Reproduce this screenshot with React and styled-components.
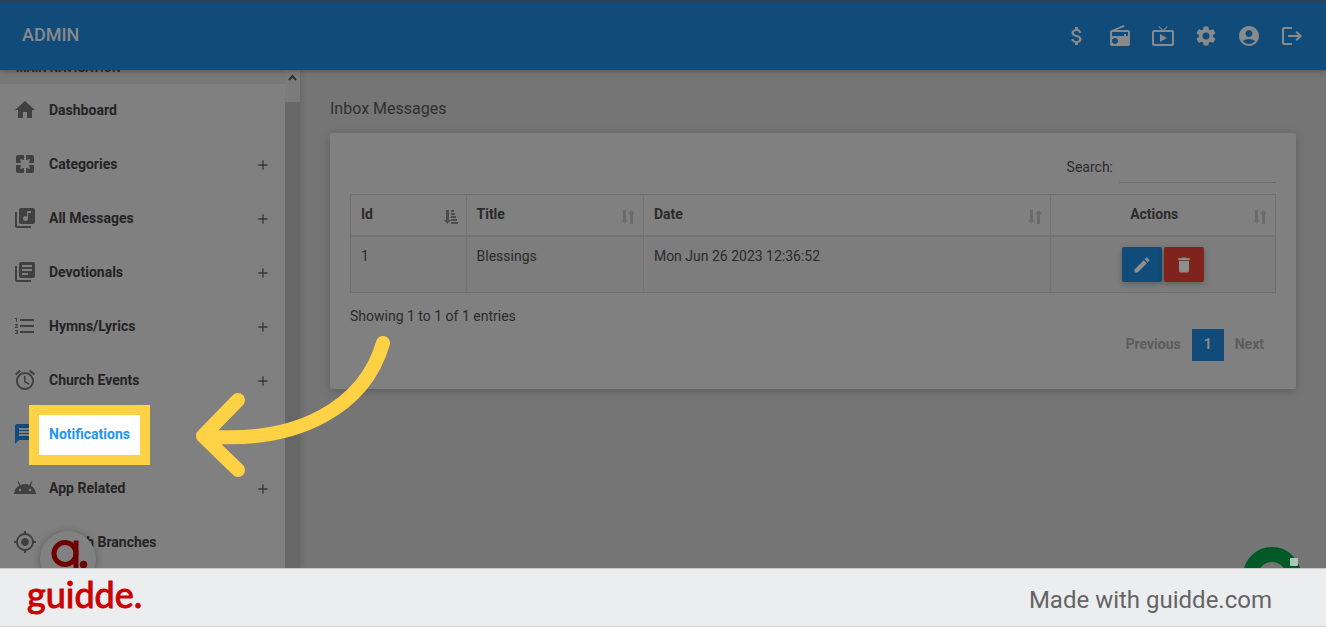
import React from "react";
import styled, { createGlobalStyle, css } from "styled-components";
import {
  MdHome,
  MdLibraryMusic,
  MdLibraryBooks,
  MdFormatListNumbered,
  MdAccessAlarm,
  MdMessage,
  MdAndroid,
  MdGpsFixed,
  MdAttachMoney,
  MdRadio,
  MdLiveTv,
  MdSettings,
  MdAccountCircle,
  MdLogout,
  MdModeEdit,
  MdDelete,
  MdAdd,
} from "react-icons/md";

const colors = {
  blue: "#104b79",
  red: "#7f231c",
  page: "#757575",
  surface: "#808080",
  line: "#747474",
  text: "#2b2b2b",
  accent: "#ffd144",
};

const GlobalStyle = createGlobalStyle`
  * { box-sizing: border-box; }
  body {
    margin: 0;
    background: ${colors.page};
    color: ${colors.text};
    font-family: Roboto, "Liberation Sans", sans-serif;
    font-size: 14px;
    line-height: 20px;
  }
  a { color: inherit; text-decoration: none; }
  button, input { font: inherit; color: inherit; }
`;

const Page = styled.div`
  display: flex;
  flex-direction: column;
  height: 100vh;
  overflow: hidden;
`;

const Header = styled.header`
  position: relative;
  z-index: 2;
  display: flex;
  flex: none;
  align-items: center;
  justify-content: space-between;
  height: 70px;
  padding: 0 22px;
  border-top: 2px solid #2b4257;
  background: ${colors.blue};
  color: #888a8c;
  box-shadow: 0 1px 5px rgba(0, 0, 0, 0.3);
`;

const Brand = styled.a`
  padding-bottom: 2px;
  font-size: 18px;
  font-weight: 500;
`;

const HeaderActions = styled.nav`
  display: flex;
  gap: 19px;
`;

const HeaderLink = styled.a`
  display: flex;
  font-size: 24px;
`;

const Body = styled.div`
  position: relative;
  display: flex;
  flex: 1;
  min-height: 0;
  overflow: hidden;
`;

const Sidebar = styled.aside`
  display: flex;
  flex: none;
  width: 300px;
  background: ${colors.surface};
  box-shadow: 2px 0 6px rgba(0, 0, 0, 0.12);
`;

const Menu = styled.nav`
  flex: 1;
`;

const MenuHeading = styled.div`
  display: flex;
  align-items: flex-end;
  height: 14px;
  padding: 0 16px 8px;
  overflow: hidden;
  background: #777777;
  font-size: 12px;
  font-weight: 700;
  line-height: 16px;
`;

const MenuList = styled.ul`
  margin: 0;
  padding: 0;
  list-style: none;
`;

const MenuLink = styled.a`
  display: flex;
  align-items: center;
  gap: 12px;
  height: 54px;
  padding: 0 14px 2px 13px;
  font-weight: 700;
  color: ${(p) => (p.$active ? "#2196f3" : "#242424")};

  > svg {
    flex: none;
    font-size: 24px;
    color: ${(p) => (p.$active ? colors.blue : "#404040")};
  }
`;

const MenuLabel = styled.span`
  position: relative;
  line-height: 54px;

  ${(p) =>
    p.$highlighted &&
    css`
      z-index: 1;

      &::before {
        content: "";
        position: absolute;
        z-index: -1;
        inset: -2px -20px -4px;
        border: 10px solid ${colors.accent};
        background: #ffffff;
      }
    `}
`;

const Expand = styled.span`
  display: flex;
  margin: 2px 0 0 auto;
  font-size: 16px;
  color: #383838;
`;

const Scrollbar = styled.div`
  display: flex;
  flex-direction: column;
  width: 15px;
  background: #676767;
`;

const ScrollUp = styled.div`
  display: flex;
  justify-content: center;
  height: 32px;
  padding-top: 4px;
  background: #7b7b7b;
`;

const Main = styled.main`
  flex: 1;
  min-width: 0;
  padding: 29px 30px;
`;

const Heading = styled.h1`
  margin: 0 0 14px;
  font-size: 16px;
  font-weight: 400;
  line-height: 20px;
  color: #303030;
`;

const Card = styled.section`
  padding: 20px 20px 28px;
  border-radius: 2px;
  background: ${colors.surface};
  box-shadow: 0 2px 10px rgba(0, 0, 0, 0.2);
`;

const SearchRow = styled.div`
  display: flex;
  justify-content: flex-end;
  margin-bottom: 11px;
`;

const SearchLabel = styled.label`
  display: flex;
  gap: 6px;
  line-height: 28px;
`;

const SearchInput = styled.input`
  width: 157px;
  height: 30px;
  padding: 0;
  border: 0;
  border-bottom: 1px solid #6c6c6c;
  outline: 0;
  background: transparent;
`;

const Table = styled.table`
  width: 100%;
  table-layout: fixed;
  border: 1px solid #6f6f6f;
  border-collapse: separate;
  border-spacing: 0;
`;

const HeadCell = styled.th`
  width: ${(p) => p.$width};
  height: 42px;
  padding: 9px 7px 11px 10px;
  border-bottom: 2px solid ${colors.line};
  border-right: ${(p) => (p.$last ? "0" : `1px solid ${colors.line}`)};
  font-weight: 700;
  vertical-align: top;
`;

const HeadContent = styled.div`
  display: flex;
  gap: 5px;
  height: 20px;
  text-align: ${(p) => (p.$center ? "center" : "left")};

  > span {
    flex: 1;
  }

  > svg {
    flex: none;
    margin-top: 5px;
  }
`;

const Cell = styled.td`
  height: 55px;
  padding: 9px 10px;
  border-right: ${(p) => (p.$last ? "0" : `1px solid ${colors.line}`)};
  background: #7d7d7d;
  vertical-align: top;
`;

const CellActions = styled.div`
  display: flex;
  justify-content: center;
  gap: 2px;
  padding-top: 1px;
`;

const ActionButton = styled.button`
  display: flex;
  align-items: center;
  justify-content: center;
  width: 40px;
  height: 35px;
  padding: 0;
  border: 0;
  border-radius: 2px;
  background: ${(p) => p.$color};
  color: #8e8e8e;
  font-size: 20px;
  box-shadow: 0 2px 6px rgba(0, 0, 0, 0.25);
`;

const Info = styled.p`
  margin: 13px 0 3px;
`;

const Pagination = styled.nav`
  display: flex;
  justify-content: flex-end;
  padding-right: 1px;
`;

const PageButton = styled.button`
  height: 32px;
  padding: 0 11px 2px;
  border: 0;
  background: ${(p) => (p.$current ? colors.blue : "transparent")};
  color: ${(p) => (p.$current ? "#8c8c8c" : "#5c5c5c")};
  font-weight: 700;
  min-width: 32px;
`;

const GuideBadge = styled.div`
  position: absolute;
  left: 40px;
  bottom: -19px;
  width: 56px;
  height: 56px;
  border-radius: 50%;
  background: #818181;
  box-shadow: 0 1px 8px rgba(0, 0, 0, 0.3);
`;

const ChatBadge = styled.div`
  position: absolute;
  right: 25px;
  bottom: -37px;
  width: 58px;
  height: 58px;
  border: 15px solid #005926;
  border-radius: 50%;

  &::after {
    content: "";
    position: absolute;
    top: -4px;
    right: -12px;
    width: 8px;
    height: 8px;
    border-radius: 1px;
    background: #a9c8b5;
  }
`;

const Pointer = styled.svg`
  position: absolute;
  z-index: 3;
  left: 190px;
  top: 260px;
  pointer-events: none;
`;

const Footer = styled.footer`
  position: relative;
  z-index: 2;
  display: flex;
  flex: none;
  align-items: center;
  justify-content: space-between;
  height: 59px;
  padding: 0 54px 0 27px;
  border-top: 1px solid #c4c5c6;
  border-bottom: 1px solid #d2d3d5;
  background: #ecedef;
`;

const Wordmark = styled.a`
  padding-bottom: 8px;
  font-family: Lato, sans-serif;
  font-size: 36px;
  font-weight: 400;
  line-height: 40px;
  color: #cb0000;
  -webkit-text-stroke: 1px #cb0000;
`;

const Credit = styled.span`
  padding-top: 4px;
  font-size: 24px;
  line-height: 32px;
  color: #636466;
`;

function CategoriesIcon() {
  return (
    <svg width="24" height="24" viewBox="0 0 24 24" fill="currentColor" aria-hidden="true">
      <path d="M3 5v6h5L7 7l4 1V3H5c-1.100 0-2 .9-2 2zM8 13H3v6c0 1.100.9 2 2 2h6v-5l-4 1 1-4zM17 17l-4-1v5h6c1.100 0 2-.9 2-2v-6h-5l1 4zM19 3h-6v5l4-1-1 4h5V5c0-1.100-.9-2-2-2z" />
    </svg>
  );
}

const headerLinks = [
  ["Donations", MdAttachMoney],
  ["Radio", MdRadio],
  ["Live TV", MdLiveTv],
  ["Settings", MdSettings],
  ["Account", MdAccountCircle],
  ["Log out", MdLogout],
];

const menuItems = [
  { label: "Dashboard", icon: MdHome },
  { label: "Categories", icon: CategoriesIcon, expandable: true },
  { label: "All Messages", icon: MdLibraryMusic, expandable: true },
  { label: "Devotionals", icon: MdLibraryBooks, expandable: true },
  { label: "Hymns/Lyrics", icon: MdFormatListNumbered, expandable: true },
  { label: "Church Events", icon: MdAccessAlarm, expandable: true },
  { label: "Notifications", icon: MdMessage, active: true },
  { label: "App Related", icon: MdAndroid, expandable: true },
  { label: "Church Branches", icon: MdGpsFixed },
];

const columns = [
  { label: "Id", width: "12.5%", sorted: true },
  { label: "Title", width: "19.2%" },
  { label: "Date", width: "44.1%" },
  { label: "Actions", width: "24.2%", center: true },
];

function SortIcon({ sorted }) {
  return (
    <svg width="16" height="16" viewBox="0 0 16 16" fill={sorted ? "#4d4d4d" : "#6b6b6b"} aria-hidden="true">
      <path d="M3 1h3v10h2L4.500 15 1 11h2z" />
      {sorted ? (
        <path d="M8 1h3v2H8zM8 4h4v2H8zM8 7h5v2H8zM8 10h6v2H8zM8 13h7v2H8z" />
      ) : (
        <path d="M10 15h3V5h2l-3.500-4L8 5h2z" />
      )}
    </svg>
  );
}

export default function App() {
  return (
    <Page>
      <GlobalStyle />
      <Header>
        <Brand href="#">ADMIN</Brand>
        <HeaderActions aria-label="Account">
          {headerLinks.map(([label, Icon]) => (
            <HeaderLink href="#" key={label} aria-label={label}>
              <Icon />
            </HeaderLink>
          ))}
        </HeaderActions>
      </Header>

      <Body>
        <Sidebar>
          <Menu aria-label="Main">
            <MenuHeading>MAIN NAVIGATION</MenuHeading>
            <MenuList>
              {menuItems.map(({ label, icon: Icon, expandable, active }) => (
                <li key={label}>
                  <MenuLink href="#" $active={active}>
                    <Icon />
                    <MenuLabel $highlighted={active}>{label}</MenuLabel>
                    {expandable && (
                      <Expand>
                        <MdAdd />
                      </Expand>
                    )}
                  </MenuLink>
                </li>
              ))}
            </MenuList>
          </Menu>
          <Scrollbar>
            <ScrollUp>
              <svg width="9" height="7" viewBox="0 0 9 7" aria-hidden="true">
                <path d="M1 6l3.500-4L8 6" fill="none" stroke="#333333" strokeWidth="2" />
              </svg>
            </ScrollUp>
          </Scrollbar>
        </Sidebar>

        <Main>
          <Heading>Inbox Messages</Heading>
          <Card>
            <SearchRow>
              <SearchLabel>
                Search:
                <SearchInput type="search" />
              </SearchLabel>
            </SearchRow>
            <Table>
              <thead>
                <tr>
                  {columns.map(({ label, width, sorted, center }) => (
                    <HeadCell key={label} $width={width} $last={center}>
                      <HeadContent $center={center}>
                        <span>{label}</span>
                        <SortIcon sorted={sorted} />
                      </HeadContent>
                    </HeadCell>
                  ))}
                </tr>
              </thead>
              <tbody>
                <tr>
                  <Cell>1</Cell>
                  <Cell>Blessings</Cell>
                  <Cell>Mon Jun 26 2023 12:36:52</Cell>
                  <Cell $last>
                    <CellActions>
                      <ActionButton type="button" aria-label="Edit" $color={colors.blue}>
                        <MdModeEdit />
                      </ActionButton>
                      <ActionButton type="button" aria-label="Delete" $color={colors.red}>
                        <MdDelete />
                      </ActionButton>
                    </CellActions>
                  </Cell>
                </tr>
              </tbody>
            </Table>
            <Info>Showing 1 to 1 of 1 entries</Info>
            <Pagination aria-label="Pagination">
              <PageButton type="button">Previous</PageButton>
              <PageButton type="button" $current>
                1
              </PageButton>
              <PageButton type="button">Next</PageButton>
            </Pagination>
          </Card>
        </Main>

        <GuideBadge>
          <svg width="56" height="56" viewBox="0 0 56 56" fill="none" stroke="#6d0000" strokeWidth="5" aria-hidden="true">
            <circle cx="25" cy="22.500" r="11" />
            <path d="M36 9.500V40" />
            <circle cx="43.500" cy="33.500" r="3.800" fill="#6d0000" stroke="none" />
          </svg>
        </GuideBadge>
        <ChatBadge />
        <Pointer width="210" height="160" viewBox="190 330 210 160" aria-hidden="true">
          <path
            d="M383 343C365 405 300 445 203 436M238 400L203 436L238 470"
            fill="none"
            stroke={colors.accent}
            strokeWidth="14"
            strokeLinecap="round"
            strokeLinejoin="round"
          />
        </Pointer>
      </Body>

      <Footer>
        <Wordmark href="#">guidde.</Wordmark>
        <Credit>Made with guidde.com</Credit>
      </Footer>
    </Page>
  );
}
